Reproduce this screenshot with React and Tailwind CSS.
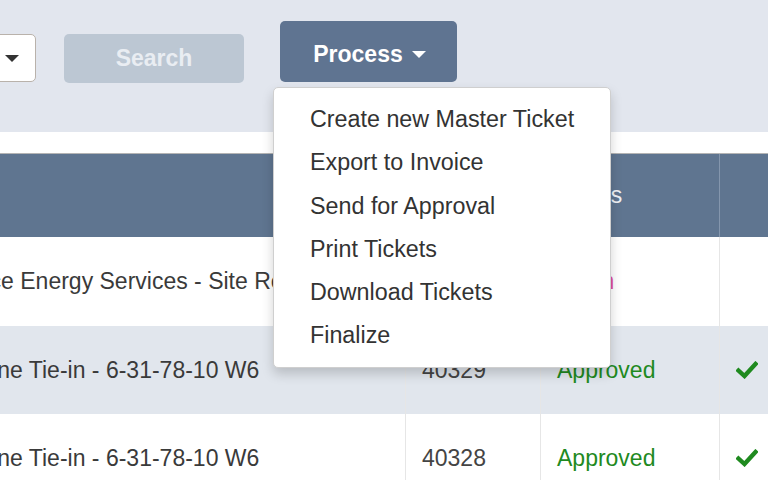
import React from "react";

const menuItems = [
  "Create new Master Ticket",
  "Export to Invoice",
  "Send for Approval",
  "Print Tickets",
  "Download Tickets",
  "Finalize",
];

const rows = [
  { name: "Source Energy Services - Site Restoration", number: "40330", status: "Open", tone: "pink", check: false, bg: "bg-white", h: "h-[89px]" },
  { name: "Pipeline Tie-in - 6-31-78-10 W6", number: "40329", status: "Approved", tone: "green", check: true, bg: "bg-[#e1e6ed]", h: "h-[88px]" },
  { name: "Pipeline Tie-in - 6-31-78-10 W6", number: "40328", status: "Approved", tone: "green", check: true, bg: "bg-white", h: "h-[88px]" },
];

function Caret({ className }) {
  return (
    <svg width="14" height="7" viewBox="0 0 14 7" className={className}>
      <path d="M0 0 L14 0 L7 7 Z" fill="currentColor" />
    </svg>
  );
}

function Check() {
  return (
    <svg width="22" height="18" viewBox="0 0 22 18">
      <path d="M2.5 9.5 L8.5 15 L19.5 3" fill="none" stroke="#1f8a1f" strokeWidth="4.4" strokeLinecap="square" />
    </svg>
  );
}

export default function App() {
  return (
    <div
      className="w-[768px] h-[480px] overflow-hidden bg-white text-[#3a3a3a]"
      style={{ fontFamily: '"Liberation Sans", Arial, sans-serif' }}
    >
      {/* toolbar */}
      <div className="h-[132px] bg-[#e2e6ee] flex items-start">
        <div className="-ml-[64px] mt-[34px] w-[100px] h-[48px] bg-white border border-[#b9b2ab] rounded-[5px] flex items-center justify-end pr-[16px]">
          <Caret className="text-[#333]" />
        </div>
        <button className="ml-[28px] mt-[34px] w-[180px] h-[49px] rounded-[5px] bg-[#bcc7d3] text-[#e9edf2] font-bold text-[23px]">
          Search
        </button>
        <div className="relative ml-[36px] mt-[21px]">
          <button className="w-[177px] h-[61px] rounded-[5px] bg-[#5f7491] text-white font-bold text-[23px] flex items-center justify-center gap-[9px] pt-[6px] pl-[2px]">
            Process
            <Caret className="text-white" />
          </button>
          <div className="absolute z-10 left-[-7px] top-[66px] w-[338px] bg-white border border-[#cfcfcf] rounded-[5px] shadow-[0_6px_12px_rgba(0,0,0,0.18)] py-[10px]">
            {menuItems.map((item) => (
              <div key={item} className="h-[43.2px] flex items-center pl-[36px] text-[23.3px] text-[#333]">
                {item}
              </div>
            ))}
          </div>
        </div>
      </div>

      {/* table */}
      <div className="h-[22px] bg-white border-b border-[#b4b4b4]" />
      <div className="overflow-hidden">
        <div className="-ml-[75px] w-[900px]">
          <div className="grid grid-cols-[481px_135px_179px_105px] h-[83px] bg-[#5f7590] text-[#eef1f5] text-[23px]">
            <div />
            <div className="flex items-center pl-[16px]">Ticket #</div>
            <div className="flex items-center pl-[16px] border-r border-[#8496ad]">Status</div>
            <div />
          </div>
          {rows.map((r, i) => (
            <div key={i} className={`grid grid-cols-[481px_135px_179px_105px] ${r.h} ${r.bg} text-[23px]`}>
              <div className="flex items-center pl-[16px] border-r border-[#e6e6e6] whitespace-nowrap overflow-hidden">
                {r.name}
              </div>
              <div className="flex items-center pl-[16px] border-r border-[#e6e6e6] text-[#444]">{r.number}</div>
              <div
                className={`flex items-center border-r border-[#e6e6e6] ${
                  r.tone === "green" ? "pl-[16px] text-[#1f8a1f]" : "pl-[17px] text-[#e0509a]"
                }`}
              >
                {r.status}
              </div>
              <div className="flex items-center pl-[16px]">{r.check && <Check />}</div>
            </div>
          ))}
        </div>
      </div>
    </div>
  );
}
